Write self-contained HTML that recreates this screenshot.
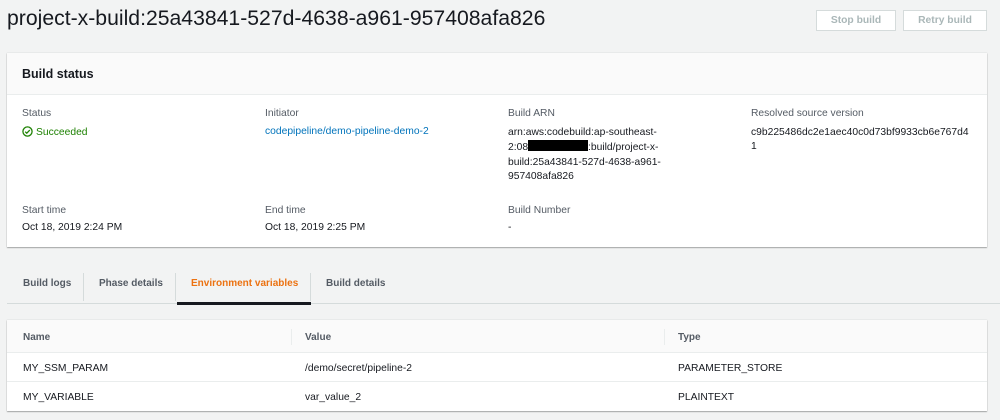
<!DOCTYPE html>
<html><head><style>
*{box-sizing:border-box;margin:0;padding:0}
body{width:1000px;height:420px;background:#f2f3f3;font-family:"Liberation Sans",Arial,sans-serif;font-size:10.3px;color:#16191f;position:relative;overflow:hidden}
.abs{position:absolute;white-space:nowrap}
h1{position:absolute;left:7px;top:7px;font-size:21.2px;font-weight:normal;color:#16191f}
.btn{position:absolute;top:10px;height:21px;border:1px solid #d5dbdb;background:#fff;color:#aab7b8;font-weight:bold;font-size:10.3px;text-align:center;line-height:19px}
.card{position:absolute;left:7px;width:980px;background:#fff;box-shadow:0 1px 1px rgba(0,0,0,.3),0 0 1px rgba(0,0,0,.2)}
.lbl{color:#545b64}
.link{color:#0073bb}
.tab{position:absolute;top:278px;font-weight:bold;color:#545b64;font-size:10px}
.sep{position:absolute;top:273px;width:1px;height:28px;background:#d5dbdb}
.th{font-weight:bold;color:#545b64;font-size:10px}
</style></head><body>
<h1>project-x-build:25a43841-527d-4638-a961-957408afa826</h1>
<div class="btn" style="left:816px;width:80px">Stop build</div>
<div class="btn" style="left:903px;width:84px">Retry build</div>

<div class="card" style="top:53px;height:194px">
 <div style="height:42px;background:#fafafa;border-bottom:1px solid #eaeded;padding:14px 15px;font-weight:bold;font-size:12.5px">Build status</div>
</div>
<div class="abs lbl" style="left:22px;top:108px">Status</div>
<div class="abs" style="left:22px;top:126px;color:#1d8102">
<svg width="11" height="11" viewBox="0 0 12 12" style="vertical-align:-2px;margin-right:3px"><circle cx="6" cy="6" r="5" fill="none" stroke="#1d8102" stroke-width="1.4"/><path d="M3.5 6.2l1.7 1.7 3.3-3.5" fill="none" stroke="#1d8102" stroke-width="1.4"/></svg>Succeeded</div>
<div class="abs lbl" style="left:265px;top:108px">Initiator</div>
<div class="abs link" style="left:265px;top:126px">codepipeline/demo-pipeline-demo-2</div>
<div class="abs lbl" style="left:508px;top:108px">Build ARN</div>
<div class="abs" style="left:508px;top:126px;line-height:14.3px">arn:aws:codebuild:ap-southeast-<br>2:08<span style="display:inline-block;width:60px;height:11px;background:#000;vertical-align:-1px"></span>:build/project-x-<br>build:25a43841-527d-4638-a961-<br>957408afa826</div>
<div class="abs lbl" style="left:751px;top:108px">Resolved source version</div>
<div class="abs" style="left:751px;top:126px;line-height:14.3px">c9b225486dc2e1aec40c0d73bf9933cb6e767d4<br>1</div>
<div class="abs lbl" style="left:22px;top:205px">Start time</div>
<div class="abs" style="left:22px;top:222px">Oct 18, 2019 2:24 PM</div>
<div class="abs lbl" style="left:265px;top:205px">End time</div>
<div class="abs" style="left:265px;top:222px">Oct 18, 2019 2:25 PM</div>
<div class="abs lbl" style="left:508px;top:205px">Build Number</div>
<div class="abs" style="left:508px;top:222px">-</div>

<div class="tab" style="left:23px">Build logs</div>
<div class="sep" style="left:83px"></div>
<div class="tab" style="left:99px">Phase details</div>
<div class="sep" style="left:175px"></div>
<div class="tab" style="left:191px;color:#ec7211">Environment variables</div>
<div class="sep" style="left:310px"></div>
<div class="tab" style="left:326px">Build details</div>
<div style="position:absolute;left:7px;top:303px;width:993px;height:1px;background:#d5dbdb"></div>
<div style="position:absolute;left:177px;top:302px;width:134px;height:3px;background:#16191f"></div>

<div class="card" style="top:320px;height:91px">
 <div style="height:33px;background:#fafafa;border-bottom:1px solid #eaeded"></div>
 <div style="height:29px;border-bottom:1px solid #eaeded"></div>
</div>
<div style="position:absolute;left:291px;top:329px;width:1px;height:16px;background:#eaeded"></div>
<div style="position:absolute;left:664px;top:329px;width:1px;height:16px;background:#eaeded"></div>
<div class="abs th" style="left:23px;top:332px">Name</div>
<div class="abs th" style="left:305px;top:332px">Value</div>
<div class="abs th" style="left:678px;top:332px">Type</div>
<div class="abs" style="left:23px;top:363px">MY_SSM_PARAM</div>
<div class="abs" style="left:305px;top:363px">/demo/secret/pipeline-2</div>
<div class="abs" style="left:678px;top:363px">PARAMETER_STORE</div>
<div class="abs" style="left:23px;top:392px">MY_VARIABLE</div>
<div class="abs" style="left:305px;top:392px">var_value_2</div>
<div class="abs" style="left:678px;top:392px">PLAINTEXT</div>
</body></html>
